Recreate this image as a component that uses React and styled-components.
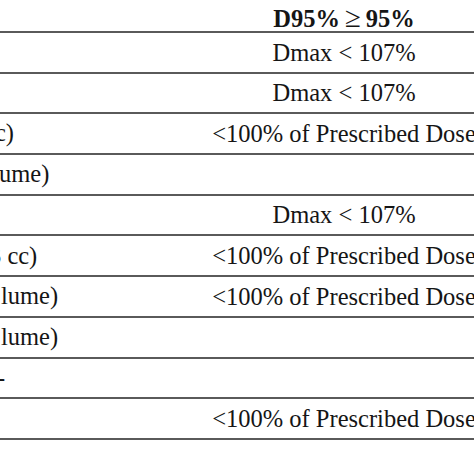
import React from "react";
import styled, { createGlobalStyle } from "styled-components";

const Global = createGlobalStyle`
  html, body { margin: 0; padding: 0; background: #ffffff; }
  #root { width: 474px; height: 474px; }
`;

const Page = styled.div`
  width: 474px;
  height: 474px;
  overflow: hidden;
  background: #ffffff;
  font-family: "Liberation Serif", "Times New Roman", serif;
  color: #151515;
`;

const Table = styled.div`
  width: 494px;
  display: flex;
  flex-direction: column;
`;

const Row = styled.div`
  display: grid;
  grid-template-columns: 194px 300px;
  box-sizing: border-box;
  height: ${(p) => (p.$header ? "33px" : "40.7px")};
  border-bottom: 2px solid #5a5a5a;
`;

const LeftCell = styled.div`
  overflow: hidden;
  white-space: nowrap;
  display: flex;
  align-items: center;
  font-size: 24.5px;
  line-height: 1;
`;

const Label = styled.span`
  margin-left: ${(p) => p.$shift || 0}px;
`;

const RightCell = styled.div`
  display: flex;
  justify-content: center;
  align-items: ${(p) => (p.$header ? "baseline" : "center")};
  padding-top: ${(p) => (p.$header ? "3px" : "1px")};
  white-space: nowrap;
  font-size: 24.5px;
  line-height: 1;
  font-weight: ${(p) => (p.$header ? 700 : 400)};
`;

const Geq = styled.span`
  font-weight: 400;
  font-size: 29px;
  line-height: 1;
  margin: 0 5px;
`;

const rows = [
  { left: "", right: "Dmax < 107%" },
  { left: "", right: "Dmax < 107%" },
  { left: "c)", shift: -5, right: "<100% of Prescribed Dose" },
  { left: "ume)", shift: -1, right: "" },
  { left: "", right: "Dmax < 107%" },
  { left: "3 cc)", shift: -11, right: "<100% of Prescribed Dose" },
  { left: "lume)", shift: 1, right: "<100% of Prescribed Dose" },
  { left: "lume)", shift: 1, right: "" },
  { left: "-", shift: -3, right: "" },
  { left: "", right: "<100% of Prescribed Dose" },
];

export default function App() {
  return (
    <>
      <Global />
      <Page>
        <Table>
          <Row $header>
            <LeftCell />
            <RightCell $header>
              D95%<Geq>≥</Geq>95%
            </RightCell>
          </Row>
          {rows.map((r, i) => (
            <Row key={i}>
              <LeftCell>
                {r.left && <Label $shift={r.shift}>{r.left}</Label>}
              </LeftCell>
              <RightCell>{r.right}</RightCell>
            </Row>
          ))}
        </Table>
      </Page>
    </>
  );
}
